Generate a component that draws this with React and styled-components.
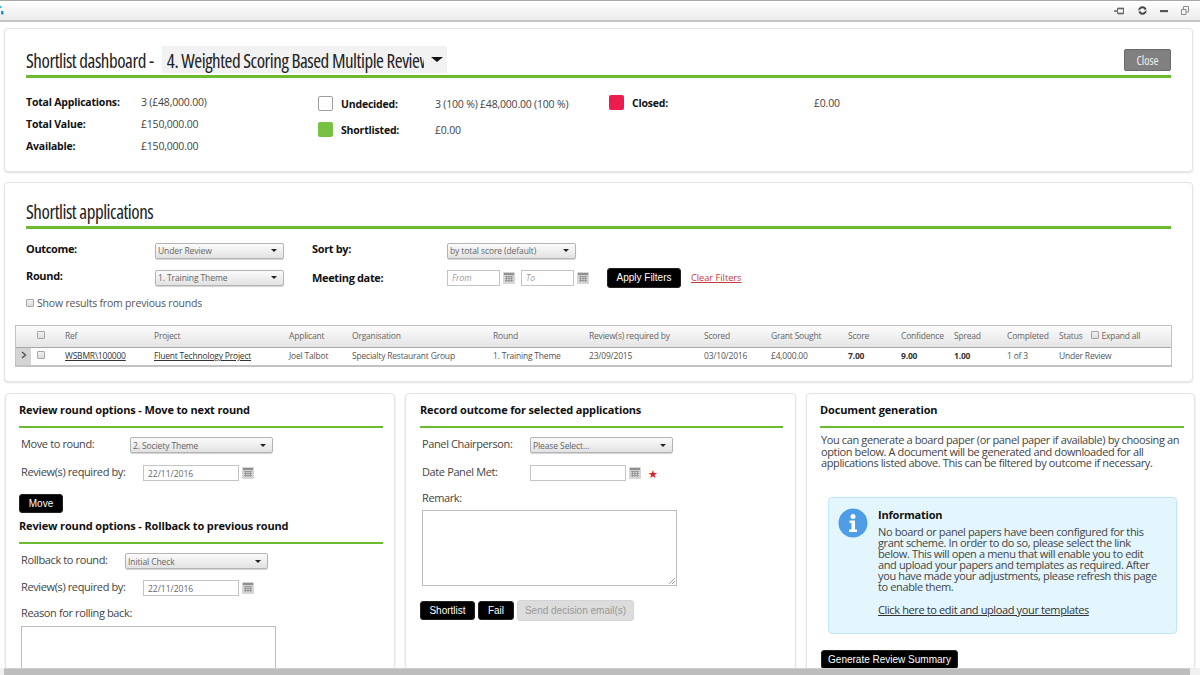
import React from 'react';
import styled, { createGlobalStyle } from 'styled-components';

const GlobalStyle = createGlobalStyle`
  html, body { margin: 0; padding: 0; background: #fff; overflow: hidden; }
  body { font-family: "Open Sans", "Noto Sans", sans-serif; color: #444; }
  * { box-sizing: border-box; }
`;

const Page = styled.div`
  position: relative;
  width: 1200px;
  height: 675px;
  overflow: hidden;
  background: #fff;
`;

const TopBar = styled.div`
  height: 22px;
  border-top: 1px solid #a9a9a9;
  border-bottom: 2px solid #c4c4c4;
  background: linear-gradient(#ffffff, #ececec);
  display: flex;
  align-items: center;
  justify-content: space-between;
  padding: 0 11px 0 0;
`;

const TopIcons = styled.div`
  display: flex;
  align-items: center;
  gap: 13px;
`;

const Content = styled.div`
  padding: 6px 7px 0 4px;
  display: flex;
  flex-direction: column;
  gap: 10px;
`;

const Card = styled.section`
  background: #fff;
  border: 1px solid #e4e4e4;
  border-radius: 4px;
  box-shadow: 0 1px 2px rgba(0, 0, 0, 0.12);
  padding: ${(p) => p.$pad || '0 21px'};
  height: ${(p) => p.$height}px;
`;

const HeadRow = styled.div`
  display: flex;
  align-items: flex-end;
  justify-content: space-between;
  border-bottom: 3px solid #6cbb2e;
  height: ${(p) => p.$height}px;
  padding-bottom: 2px;
`;

const HeadLeft = styled.div`
  display: flex;
  align-items: center;
  gap: 8px;
`;

const BigTitle = styled.h1`
  margin: 0;
  padding-top: 2px;
  font-size: 19px;
  font-weight: 400;
  font-stretch: 75%;
  color: #222;
  line-height: 24px;
  letter-spacing: -0.45px;
  white-space: nowrap;
`;

const SchemePicker = styled.div`
  width: 285px;
  height: 27px;
  background: #f3f2f3;
  display: flex;
  align-items: center;
  padding-left: 5px;
  gap: 7px;
`;

const SchemeText = styled(BigTitle)`
  width: 257px;
  overflow: hidden;
`;

const Caret = styled.span`
  width: 0;
  height: 0;
  border-left: 6px solid transparent;
  border-right: 6px solid transparent;
  border-top: 5px solid #111;
`;

const CloseButton = styled.button`
  width: 47px;
  height: 22px;
  margin-bottom: 2px;
  background: #808080;
  border: 1px solid #6a6a6a;
  border-radius: 2px;
  color: #f0f0f0;
  font: 400 12px "Open Sans", sans-serif;
  font-stretch: 85%;
  padding: 0;
`;

const StatGrid = styled.div`
  display: grid;
  grid-template-columns: 292px 291px 1fr;
  padding-top: 16px;
`;

const StatColumn = styled.div`
  display: flex;
  flex-direction: column;
  gap: ${(p) => p.$gap}px;
  margin-top: ${(p) => p.$top || 0}px;
`;

const StatRow = styled.div`
  display: grid;
  grid-template-columns: ${(p) => p.$cols};
  align-items: center;
  height: 15px;
  font-size: 10.5px;
  letter-spacing: -0.2px;
`;

const Strong = styled.span`
  font-weight: 700;
  color: #111;
  font-size: 10.5px;
`;

const Swatch = styled.span`
  width: 15px;
  height: 15px;
  border-radius: 2px;
  background: ${(p) => p.$color};
  border: ${(p) => (p.$outlined ? '1px solid #9e9e9e' : 'none')};
`;

const Filters = styled.div`
  display: grid;
  grid-template-columns: 129px 157px 135px 1fr;
  grid-auto-rows: 27px;
  padding-top: 8px;
  align-items: center;
`;

const FieldLabel = styled.span`
  font-weight: 700;
  font-size: 11px;
  color: #111;
  letter-spacing: -0.35px;
  padding-bottom: ${(p) => p.$up || 0}px;
`;

const SelectBox = styled.div`
  width: ${(p) => p.$width}px;
  height: 16px;
  border: 1px solid #b4b4b4;
  border-radius: 2px;
  background: linear-gradient(#fbfbfb, #e2e2e2);
  box-shadow: 0 1px 1px rgba(0, 0, 0, 0.18);
  display: flex;
  align-items: center;
  justify-content: space-between;
  padding: 0 6px 0 2px;
  font-size: 8.5px;
  letter-spacing: -0.1px;
  color: #666;
  flex: none;
`;

const MiniCaret = styled.span`
  width: 0;
  height: 0;
  border-left: 3px solid transparent;
  border-right: 3px solid transparent;
  border-top: 3px solid #222;
`;

const DateGroup = styled.div`
  display: flex;
  align-items: center;
  gap: 3px;
`;

const DateInput = styled.div`
  width: ${(p) => p.$width}px;
  height: 16px;
  margin-left: ${(p) => p.$left || 0}px;
  border: 1px solid #c4c4c4;
  font-size: 8.5px;
  font-style: ${(p) => (p.$hint ? 'italic' : 'normal')};
  color: ${(p) => (p.$hint ? '#999' : '#666')};
  padding: 0 4px;
  display: flex;
  align-items: center;
  flex: none;
`;

const FilterActions = styled.div`
  display: flex;
  align-items: center;
  margin-left: 15px;
  gap: 10px;
`;

const BlackButton = styled.button`
  background: #000;
  color: #fff;
  border: 1px solid #222;
  border-radius: 3px;
  height: ${(p) => p.$h || 19}px;
  width: ${(p) => p.$width}px;
  padding: 0;
  font: 400 10px "Liberation Sans", Arial, sans-serif;
  flex: none;
`;

const ClearLink = styled.a`
  color: #c43a36;
  font-size: 9.2px;
  text-decoration: underline;
`;

const PreviousRounds = styled.label`
  display: flex;
  align-items: center;
  gap: 3px;
  font-size: 10.5px;
  letter-spacing: -0.2px;
  color: #555;
  height: 16px;
  margin-top: 4px;
`;

const Tick = styled.span`
  display: inline-block;
  width: 8px;
  height: 8px;
  border: 1px solid #a6a6a6;
  border-radius: 1px;
  background: linear-gradient(#f2f2f2, #dcdcdc);
  flex: none;
`;

const TableWrap = styled.div`
  margin: 14px -1px 0 -11px;
  border: 1px solid #c2c2c2;
  border-bottom-width: 2px;
`;

const AppTable = styled.table`
  width: 100%;
  border-collapse: collapse;
  table-layout: fixed;
  font-size: 8.5px;
  letter-spacing: -0.2px;
  color: #555;

  th {
    height: 21px;
    font-weight: 400;
    text-align: left;
    padding: 0 0 2px;
    color: #666;
    white-space: nowrap;
    background: linear-gradient(#fcfcfc, #e4e4e4);
    border-bottom: 1px solid #a8a8a8;
  }

  td {
    height: 18px;
    padding: 0 0 1px;
    white-space: nowrap;
  }
`;

const TickCell = styled.span`
  display: block;
  padding-left: 6px;
  line-height: 8px;
`;

const Toggler = styled.td`
  background: #d4d4d4;
  text-align: center;
`;

const CellLink = styled.a`
  color: #333;
  text-decoration: underline;
`;

const Num = styled.td`
  font-weight: 700;
  color: #333;
`;

const StatusHead = styled.span`
  display: flex;
  align-items: center;
`;

const ExpandAll = styled.span`
  display: inline-flex;
  align-items: center;
  gap: 3px;
  margin-left: 8px;
`;

const BottomGrid = styled.div`
  display: grid;
  grid-template-columns: 390px 391px 389px;
  gap: 10px;
  margin: 1px 0 0 1px;
`;

const PanelTitle = styled.h2`
  margin: 0;
  margin-top: ${(p) => p.$top || 0}px;
  font-size: 11px;
  font-weight: 700;
  font-stretch: 92%;
  color: #111;
  height: 26px;
  border-bottom: 2px solid #6cbb2e;
  line-height: 15px;
  letter-spacing: -0.15px;
`;

const FormRow = styled.div`
  display: flex;
  align-items: center;
  padding-left: 2px;
  height: 16px;
  margin-top: ${(p) => p.$top}px;
`;

const RowLabel = styled.span`
  width: ${(p) => p.$width}px;
  padding-bottom: 4px;
  font-size: 11px;
  font-stretch: 95%;
  color: #444;
  letter-spacing: -0.38px;
  flex: none;
`;

const BlockLabel = styled.div`
  font-size: 11px;
  font-stretch: 95%;
  color: #444;
  letter-spacing: -0.38px;
  padding-left: 2px;
  margin-top: ${(p) => p.$top}px;
  height: 14px;
  line-height: 14px;
`;

const TextBox = styled.div`
  position: relative;
  width: 255px;
  height: ${(p) => p.$height}px;
  margin: ${(p) => p.$top}px 0 0 2px;
  border: 1px solid #bdbdbd;
`;

const Grip = styled.svg`
  position: absolute;
  right: 1px;
  bottom: 1px;
`;

const Required = styled.span`
  color: #e0202a;
  font-size: 11px;
  margin-left: 4px;
`;

const ButtonRow = styled.div`
  display: flex;
  gap: 3px;
  margin-top: ${(p) => p.$top}px;
  margin-left: ${(p) => p.$left || 0}px;
`;

const MutedButton = styled(BlackButton)`
  background: #dcdcdc;
  border-color: #d4d4d4;
  color: #999;
  height: 21px;
  margin-top: -1px;
`;

const Paragraph = styled.p`
  margin: 6px 0 0 1px;
  font-size: 11px;
  font-stretch: 95%;
  line-height: 11.5px;
  letter-spacing: -0.38px;
  color: #444;
  width: 366px;
`;

const InfoBox = styled.div`
  display: flex;
  gap: 10px;
  height: 137px;
  margin: 28px 0 0 8px;
  width: 349px;
  padding: 10px 18px 0 9px;
  background: #e3f6fd;
  border: 1px solid #bfe6f5;
  border-radius: 4px;
`;

const InfoBody = styled.div`
  font-size: 11px;
  font-stretch: 95%;
  line-height: 11px;
  letter-spacing: -0.37px;
  color: #444;
`;

const InfoTitle = styled.div`
  font-weight: 700;
  font-stretch: 100%;
  letter-spacing: -0.2px;
  color: #111;
  line-height: 13px;
  margin-bottom: 5px;
`;

const InfoLink = styled.a`
  display: block;
  margin-top: 12px;
  color: #333;
  text-decoration: underline;
`;

const HScroll = styled.div`
  position: absolute;
  left: 0;
  right: 0;
  bottom: 0;
  height: 7px;
  display: flex;
  align-items: stretch;
`;

const ScrollEnd = styled.div`
  width: ${(p) => p.$width}px;
  background: #f0f0f0;
  flex: none;
`;

const ScrollThumb = styled.div`
  flex: 1;
  background: #bdbdbd;
  border-top: 1px solid #cfcfcf;
`;

const Calendar = () => (
  <svg width="12" height="12" viewBox="0 0 12 12" style={{ flex: 'none' }}>
    <rect width="12" height="12" rx="1" fill="#d5d5d5" />
    <rect x="1" y="1" width="10" height="2" fill="#8f8f8f" />
    <path d="M2 4.5h8M2 6.5h8M2 8.5h8M3.5 4v6M6 4v6M8.5 4v6" stroke="#8a8a8a" strokeWidth="0.7" />
  </svg>
);

const columns = [15, 34, 89, 135, 63, 141, 96, 115, 67, 77, 53, 53, 53, 52, 112];

const App = () => (
  <Page>
    <GlobalStyle />
    <TopBar>
      <svg width="4" height="12" viewBox="0 0 4 12">
        <rect x="0" y="1" width="1.500" height="2" fill="#38b6e8" />
        <rect x="1" y="6" width="2.500" height="3.500" fill="#1d8fe0" />
      </svg>
      <TopIcons>
        <svg width="11" height="8" viewBox="0 0 11 8">
          <path d="M0 4h3" stroke="#444" strokeWidth="1.200" />
          <path d="M3.500 1.500h6.500M4 6.500h5.500" stroke="#333" strokeWidth="1.300" />
          <path d="M3.500 1.500h6v5h-6z" fill="none" stroke="#666" />
        </svg>
        <svg width="9" height="9" viewBox="0 0 9 9">
          <circle cx="4.500" cy="4.500" r="3.200" fill="none" stroke="#444" strokeWidth="2" />
          <path d="M0 5.500l3.500-2M9 3.500L5.500 5.500" stroke="#f4f4f4" strokeWidth="1.100" />
        </svg>
        <svg width="8" height="8" viewBox="0 0 8 8">
          <rect x="0" y="3" width="8" height="2.200" fill="#555" />
        </svg>
        <svg width="8" height="9" viewBox="0 0 8 9">
          <path d="M.5 3.500h4.500v5H.5zM2.500 3.500V.5h5v5.500H5" fill="none" stroke="#8a8a8a" />
        </svg>
      </TopIcons>
    </TopBar>
    <Content>
      <Card $height={144}>
        <HeadRow $height={49}>
          <HeadLeft>
            <BigTitle>Shortlist dashboard -</BigTitle>
            <SchemePicker>
              <SchemeText as="div">4. Weighted Scoring Based Multiple Reviews</SchemeText>
              <Caret />
            </SchemePicker>
          </HeadLeft>
          <CloseButton>Close</CloseButton>
        </HeadRow>
        <StatGrid>
          <StatColumn $gap={7}>
            <StatRow $cols="115px 1fr"><Strong>Total Applications:</Strong><span>3 (£48,000.00)</span></StatRow>
            <StatRow $cols="115px 1fr"><Strong>Total Value:</Strong><span>£150,000.00</span></StatRow>
            <StatRow $cols="115px 1fr"><Strong>Available:</Strong><span>£150,000.00</span></StatRow>
          </StatColumn>
          <StatColumn $gap={11} $top={2}>
            <StatRow $cols="23px 94px 1fr"><Swatch $color="#fff" $outlined /><Strong>Undecided:</Strong><span>3 (100 %) £48,000.00 (100 %)</span></StatRow>
            <StatRow $cols="23px 94px 1fr"><Swatch $color="#78c142" /><Strong>Shortlisted:</Strong><span>£0.00</span></StatRow>
          </StatColumn>
          <StatColumn $gap={11} $top={1}>
            <StatRow $cols="23px 182px 1fr"><Swatch $color="#ee1c4e" /><Strong>Closed:</Strong><span>£0.00</span></StatRow>
          </StatColumn>
        </StatGrid>
      </Card>

      <Card $height={200}>
        <HeadRow $height={46}>
          <BigTitle>Shortlist applications</BigTitle>
        </HeadRow>
        <Filters>
          <FieldLabel $up={5}>Outcome:</FieldLabel>
          <SelectBox $width={129}>Under Review<MiniCaret /></SelectBox>
          <FieldLabel $up={5}>Sort by:</FieldLabel>
          <SelectBox $width={129}>by total score (default)<MiniCaret /></SelectBox>
          <FieldLabel $up={5}>Round:</FieldLabel>
          <SelectBox $width={129}>1. Training Theme<MiniCaret /></SelectBox>
          <FieldLabel>Meeting date:</FieldLabel>
          <DateGroup>
            <DateInput $width={53} $hint>From</DateInput>
            <Calendar />
            <DateInput $width={53} $hint $left={3}>To</DateInput>
            <Calendar />
            <FilterActions>
              <BlackButton $width={74} $h={20}>Apply Filters</BlackButton>
              <ClearLink>Clear Filters</ClearLink>
            </FilterActions>
          </DateGroup>
        </Filters>
        <PreviousRounds><Tick />Show results from previous rounds</PreviousRounds>
        <TableWrap>
          <AppTable>
            <colgroup>
              {columns.map((w, i) => <col key={i} style={{ width: w }} />)}
            </colgroup>
            <thead>
              <tr>
                <th />
                <th><TickCell><Tick /></TickCell></th>
                <th>Ref</th>
                <th>Project</th>
                <th>Applicant</th>
                <th>Organisation</th>
                <th>Round</th>
                <th>Review(s) required by</th>
                <th>Scored</th>
                <th>Grant Sought</th>
                <th>Score</th>
                <th>Confidence</th>
                <th>Spread</th>
                <th>Completed</th>
                <th><StatusHead>Status<ExpandAll><Tick />Expand all</ExpandAll></StatusHead></th>
              </tr>
            </thead>
            <tbody>
              <tr>
                <Toggler>
                  <svg width="6" height="8" viewBox="0 0 6 8">
                    <path d="M1 1l3.500 3L1 7" fill="none" stroke="#555" strokeWidth="1.500" />
                  </svg>
                </Toggler>
                <td><TickCell><Tick /></TickCell></td>
                <td><CellLink>WSBMR\100000</CellLink></td>
                <td><CellLink>Fluent Technology Project</CellLink></td>
                <td>Joel Talbot</td>
                <td>Specialty Restaurant Group</td>
                <td>1. Training Theme</td>
                <td>23/09/2015</td>
                <td>03/10/2016</td>
                <td>£4,000.00</td>
                <Num>7.00</Num>
                <Num>9.00</Num>
                <Num>1.00</Num>
                <td>1 of 3</td>
                <td>Under Review</td>
              </tr>
            </tbody>
          </AppTable>
        </TableWrap>
      </Card>

      <BottomGrid>
        <Card $height={300} $pad="8px 11px 0 13px">
          <PanelTitle>Review round options - Move to next round</PanelTitle>
          <FormRow $top={9}>
            <RowLabel $width={109}>Move to round:</RowLabel>
            <SelectBox $width={143}>2. Society Theme<MiniCaret /></SelectBox>
          </FormRow>
          <FormRow $top={12}>
            <RowLabel $width={122}>Review(s) required by:</RowLabel>
            <DateGroup>
              <DateInput $width={96}>22/11/2016</DateInput>
              <Calendar />
            </DateGroup>
          </FormRow>
          <ButtonRow $top={13}><BlackButton $width={44}>Move</BlackButton></ButtonRow>
          <PanelTitle $top={5}>Review round options - Rollback to previous round</PanelTitle>
          <FormRow $top={9}>
            <RowLabel $width={104}>Rollback to round:</RowLabel>
            <SelectBox $width={143}>Initial Check<MiniCaret /></SelectBox>
          </FormRow>
          <FormRow $top={11}>
            <RowLabel $width={122}>Review(s) required by:</RowLabel>
            <DateGroup>
              <DateInput $width={96}>22/11/2016</DateInput>
              <Calendar />
            </DateGroup>
          </FormRow>
          <BlockLabel $top={10}>Reason for rolling back:</BlockLabel>
          <TextBox $height={60} $top={6} />
        </Card>

        <Card $height={300} $pad="8px 12px 0 14px">
          <PanelTitle>Record outcome for selected applications</PanelTitle>
          <FormRow $top={9}>
            <RowLabel $width={108}>Panel Chairperson:</RowLabel>
            <SelectBox $width={143}>Please Select...<MiniCaret /></SelectBox>
          </FormRow>
          <FormRow $top={12}>
            <RowLabel $width={108}>Date Panel Met:</RowLabel>
            <DateGroup>
              <DateInput $width={96} />
              <Calendar />
              <Required>★</Required>
            </DateGroup>
          </FormRow>
          <BlockLabel $top={10}>Remark:</BlockLabel>
          <TextBox $height={76} $top={5}>
            <Grip width="7" height="7" viewBox="0 0 7 7">
              <path d="M1 7l6-6M4 7l3-3" stroke="#888" strokeWidth="0.8" />
            </Grip>
          </TextBox>
          <ButtonRow $top={15}>
            <BlackButton $width={55}>Shortlist</BlackButton>
            <BlackButton $width={36}>Fail</BlackButton>
            <MutedButton $width={117}>Send decision email(s)</MutedButton>
          </ButtonRow>
        </Card>

        <Card $height={300} $pad="8px 10px 0 13px">
          <PanelTitle>Document generation</PanelTitle>
          <Paragraph>
            You can generate a board paper (or panel paper if available) by choosing an option below. A document will be generated and downloaded for all applications listed above. This can be filtered by outcome if necessary.
          </Paragraph>
          <InfoBox>
            <svg width="30" height="30" viewBox="0 0 30 30" style={{ flex: 'none' }}>
              <circle cx="15" cy="15" r="14.500" fill="#4e9de6" />
              <circle cx="15" cy="8.500" r="2.500" fill="#fff" />
              <path d="M11.500 12.500h5.500v9h2v2.500h-8v-2.500h2.500v-6.500h-2z" fill="#fff" />
            </svg>
            <InfoBody>
              <InfoTitle>Information</InfoTitle>
              No board or panel papers have been configured for this grant scheme. In order to do so, please select the link below. This will open a menu that will enable you to edit and upload your papers and templates as required. After you have made your adjustments, please refresh this page to enable them.
              <InfoLink>Click here to edit and upload your templates</InfoLink>
            </InfoBody>
          </InfoBox>
          <ButtonRow $top={16} $left={1}>
            <BlackButton $width={137}>Generate Review Summary</BlackButton>
          </ButtonRow>
        </Card>
      </BottomGrid>
    </Content>
    <HScroll>
      <ScrollEnd $width={4} />
      <ScrollThumb />
      <ScrollEnd $width={10} />
    </HScroll>
  </Page>
);

export default App;
